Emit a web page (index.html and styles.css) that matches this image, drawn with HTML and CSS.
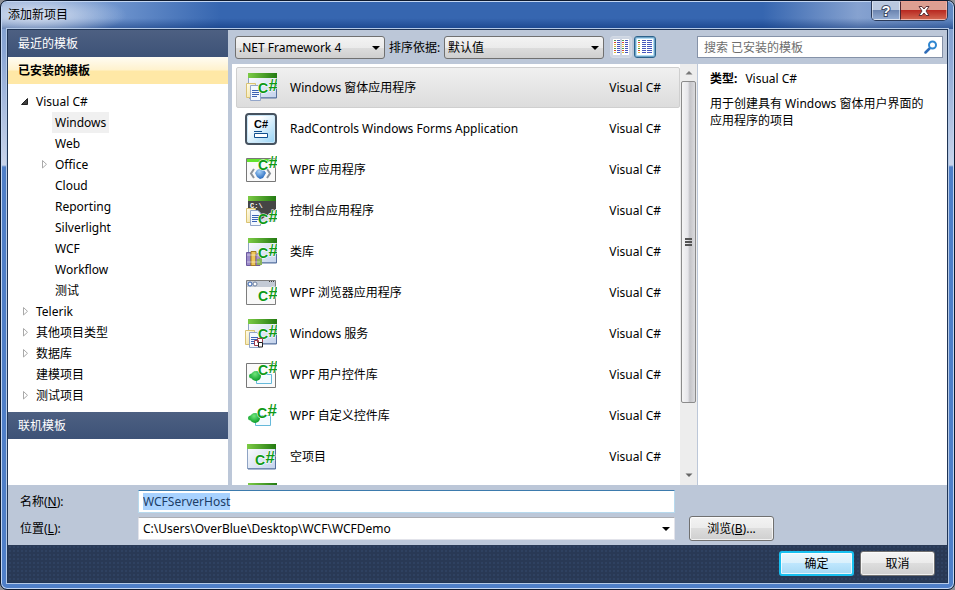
FILE: index.html
```
<!DOCTYPE html>
<html lang="zh-CN">
<head>
  <meta charset="UTF-8" />
  <title>添加新项目</title>
  <meta name="viewport" content="width=device-width, initial-scale=1.0">
  <link rel="stylesheet" href="styles.css">
</head>
<body>
  <!-- shared icon parts -->
  <svg class="defs" width="0" height="0" aria-hidden="true">
    <defs>
      <linearGradient id="gBar" x1="0" y1="0" x2="1" y2="0">
        <stop offset="0" stop-color="#7ccb45"/><stop offset="1" stop-color="#237a12"/>
      </linearGradient>
      <linearGradient id="gPane" x1="0" y1="0" x2="1" y2="1">
        <stop offset="0" stop-color="#ffffff"/><stop offset="1" stop-color="#c3d2ec"/>
      </linearGradient>
      <linearGradient id="gPage" x1="0" y1="0" x2="1" y2="1">
        <stop offset="0" stop-color="#fffdf0"/><stop offset="1" stop-color="#f0dc8c"/>
      </linearGradient>
      <linearGradient id="gRad" x1="0" y1="0" x2="1" y2="1">
        <stop offset="0.3" stop-color="#ffffff"/><stop offset="1" stop-color="#8fd0f5"/>
      </linearGradient>
      <radialGradient id="gBall" cx="0.4" cy="0.3" r="0.7">
        <stop offset="0" stop-color="#6fe67a"/><stop offset="1" stop-color="#0c9d2a"/>
      </radialGradient>
      <radialGradient id="gHex" cx="0.4" cy="0.3" r="0.7">
        <stop offset="0" stop-color="#a9d2f8"/><stop offset="1" stop-color="#2468bd"/>
      </radialGradient>
    </defs>
    <symbol id="window" viewBox="0 0 30 26">
      <rect x="0.5" y="0.5" width="28" height="24" fill="url(#gPane)" stroke="#8ea3c4"/>
      <path d="M28.5 4V25H1" fill="none" stroke="#56719f"/>
      <rect x="0" y="0" width="29" height="5" fill="url(#gBar)"/>
    </symbol>
    <symbol id="pages" viewBox="0 0 16 18">
      <path d="M0.500.5H9.500V14.500H0.500Z" fill="url(#gPage)" stroke="#d9c273"/>
      <path d="M4.500 2.500H12L14.500 5V17.500H4.500Z" fill="#f3f8ff" stroke="#92a5c9"/>
      <path d="M6 7.500H13M6 9.500H13M6 11.500H13M6 13.500H11" stroke="#3b62b4"/>
    </symbol>
  </svg>

  <div class="window">
    <header class="titlebar">
      <h1>添加新项目</h1>
      <div class="caption-buttons">
        <button class="caption help" type="button" aria-label="帮助">
          <svg width="14" height="14" viewBox="0 0 14 14"><text class="help-mark" x="7" y="12" text-anchor="middle">?</text></svg>
        </button>
        <button class="caption close" type="button" aria-label="关闭">
          <svg width="14" height="12" viewBox="0 0 14 12"><path d="M2 1.500H5L7 4 9 1.500H12L9 6 12 10.500H9L7 8 5 10.500H2L5 6Z" fill="#fff" stroke="#5b3036"/></svg>
        </button>
      </div>
    </header>

    <form class="client" onsubmit="return false">
      <div class="panes">
        <nav class="sidebar">
          <h2 class="group">最近的模板</h2>
          <h2 class="group active">已安装的模板</h2>
          <ul class="tree">
            <li><a href="#"><svg class="twisty" viewBox="0 0 9 9"><path d="M6.500 1.500V7.500H0.500Z" fill="#404040" stroke="#222"/></svg>Visual C#</a>
              <ul>
                <li><a href="#" class="current"><span>Windows</span></a></li>
                <li><a href="#">Web</a></li>
                <li><a href="#"><svg class="twisty" viewBox="0 0 9 9"><path d="M2.500 0.500V8L6.500 4.300Z" fill="#fff" stroke="#a9a9a9"/></svg>Office</a></li>
                <li><a href="#">Cloud</a></li>
                <li><a href="#">Reporting</a></li>
                <li><a href="#">Silverlight</a></li>
                <li><a href="#">WCF</a></li>
                <li><a href="#">Workflow</a></li>
                <li><a href="#">测试</a></li>
              </ul>
            </li>
            <li><a href="#"><svg class="twisty" viewBox="0 0 9 9"><path d="M2.500 0.500V8L6.500 4.300Z" fill="#fff" stroke="#a9a9a9"/></svg>Telerik</a></li>
            <li><a href="#"><svg class="twisty" viewBox="0 0 9 9"><path d="M2.500 0.500V8L6.500 4.300Z" fill="#fff" stroke="#a9a9a9"/></svg>其他项目类型</a></li>
            <li><a href="#"><svg class="twisty" viewBox="0 0 9 9"><path d="M2.500 0.500V8L6.500 4.300Z" fill="#fff" stroke="#a9a9a9"/></svg>数据库</a></li>
            <li><a href="#">建模项目</a></li>
            <li><a href="#"><svg class="twisty" viewBox="0 0 9 9"><path d="M2.500 0.500V8L6.500 4.300Z" fill="#fff" stroke="#a9a9a9"/></svg>测试项目</a></li>
          </ul>
          <h2 class="group">联机模板</h2>
        </nav>

        <section class="main">
          <div class="toolbar">
            <span class="select framework">
              <select aria-label="框架"><option>.NET Framework 4</option></select>
            </span>
            <label for="sort">排序依据:</label>
            <span class="select sort">
              <select id="sort"><option>默认值</option></select>
            </span>
            <button class="view" type="button" aria-label="小图标">
              <svg width="16" height="16" viewBox="0 0 16 16">
                <path d="M0 0H7V16H0ZM9 0H16V16H9Z" fill="#fff"/>
                <path d="M1 1.500H3M9 1.500H11M1 9.500H3M9 9.500H11" stroke="#4f9a48"/>
                <path d="M1 3.500H3M9 3.500H11M1 11.500H3M9 11.500H11" stroke="#d9442f"/>
                <path d="M1 5.500H3M9 5.500H11M1 7.500H3M9 7.500H11M1 13.500H3M9 13.500H11" stroke="#d8b83a"/>
                <path d="M4 1.500H7M4 3.500H7M4 5.500H7M4 7.500H7M4 9.500H7M4 11.500H7M4 13.500H7M12 1.500H15M12 3.500H15M12 5.500H15M12 7.500H15M12 9.500H15M12 11.500H15M12 13.500H15" stroke="#4657bd"/>
              </svg>
            </button>
            <button class="view pressed" type="button" aria-label="中等图标">
              <svg width="16" height="16" viewBox="0 0 16 16">
                <path d="M0 0H16V16H0Z" fill="#fff"/>
                <path d="M1 1.500H3M1 9.500H3" stroke="#4f9a48"/>
                <path d="M1 3.500H3M1 11.500H3" stroke="#d9442f"/>
                <path d="M1 5.500H3M1 7.500H3M1 13.500H3" stroke="#d8b83a"/>
                <path d="M5 1.500H9M5 3.500H9M5 5.500H9M5 7.500H9M5 9.500H9M5 11.500H9M5 13.500H9M10 1.500H15M10 3.500H15M10 5.500H15M10 7.500H15M10 9.500H15M10 11.500H15M10 13.500H15" stroke="#4657bd"/>
              </svg>
            </button>
          </div>

          <div class="list-wrap">
            <ul class="templates">
              <li><a href="#" class="selected">
                <svg class="icon" viewBox="0 0 32 32"><use href="#window" x="3" y="1" width="30" height="26"/><use href="#pages" x="1" y="11" width="16" height="18"/><text class="cs-text" x="13" y="21">C<tspan class="sharp">#</tspan></text></svg>
                <span class="name">Windows 窗体应用程序</span><span>Visual C#</span></a></li>
              <li><a href="#">
                <svg class="icon" viewBox="0 0 32 32"><rect x="1" y="1" width="30" height="30" rx="3" fill="url(#gRad)" stroke="#46525f" stroke-width="2"/><rect x="2.500" y="2.500" width="27" height="27" rx="2" fill="none" stroke="#c9e6f7"/><text class="rad-text" x="16" y="15" text-anchor="middle">C#</text><path d="M9 18.500H17M9.500 20.500H22.500V24.500H9.500Z" fill="#fff" stroke="#12508f"/></svg>
                <span class="name">RadControls Windows Forms Application</span><span>Visual C#</span></a></li>
              <li><a href="#">
                <svg class="icon" viewBox="0 0 32 32"><path d="M1.500 4.500H30.500V27.500H1.500Z" fill="#fafafa" stroke="#777"/><path d="M2 5H30V8H2Z" fill="#63e32e"/><path d="M9 15L6 19.500 9 24M22 15L25 19.500 22 24" fill="none" stroke="#8c939b" stroke-width="2"/><path d="M12 16L15 14.500 19 16 21 19 18 24 15 25 12 23 10 19Z" fill="url(#gHex)"/><text class="cs-text" x="13" y="16">C<tspan class="sharp">#</tspan></text></svg>
                <span class="name">WPF 应用程序</span><span>Visual C#</span></a></li>
              <li><a href="#">
                <svg class="icon" viewBox="0 0 32 32"><rect x="3" y="1" width="28" height="25" fill="#454545"/><rect x="3" y="1" width="28" height="5" fill="url(#gBar)"/><text class="prompt" x="5" y="13">C:\</text><path d="M14 26L31 14V27H14Z" fill="#d5dce8"/><use href="#pages" x="1" y="13" width="16" height="18"/><text class="cs-text" x="13" y="29">C<tspan class="sharp">#</tspan></text></svg>
                <span class="name">控制台应用程序</span><span>Visual C#</span></a></li>
              <li><a href="#">
                <svg class="icon" viewBox="0 0 32 32"><use href="#window" x="3" y="2" width="30" height="26"/><path d="M1.500 16.500H6V29.500H1.500Z" fill="#9b8ac9" stroke="#6c5a9e"/><path d="M6 15.500H11V29.500H6Z" fill="#eec659" stroke="#a67c22"/><path d="M11 18.500L15 17V29.500H11Z" fill="#ae92c8" stroke="#735a94"/><path d="M12 23L17 22V29H12Z" fill="#8bb45a"/><path d="M2 19H15M2 26H15" stroke="#fff" opacity="0.500"/><text class="cs-text" x="13" y="22">C<tspan class="sharp">#</tspan></text></svg>
                <span class="name">类库</span><span>Visual C#</span></a></li>
              <li><a href="#">
                <svg class="icon" viewBox="0 0 32 32"><path d="M1.500 3.500H30.500V27.500H1.500Z" fill="#f8f8f8" stroke="#7d7d7d"/><path d="M2 4H30V10H2Z" fill="#c3cad5"/><circle cx="5" cy="7" r="2" fill="#fff" stroke="#3461ad"/><circle cx="10" cy="7" r="2" fill="#fff" stroke="#6d7f9d"/><path d="M24 4.500H29" stroke="#444" stroke-dasharray="1 1"/><text class="cs-text" x="13" y="24">C<tspan class="sharp">#</tspan></text></svg>
                <span class="name">WPF 浏览器应用程序</span><span>Visual C#</span></a></li>
              <li><a href="#">
                <svg class="icon" viewBox="0 0 32 32"><use href="#window" x="3" y="1" width="30" height="26"/><use href="#pages" x="0" y="12" width="16" height="18"/><text class="cs-text" x="13" y="21">C<tspan class="sharp">#</tspan></text><path d="M9.500 22.500H13.500V27.500H9.500ZM12.500 20.500H17.500V24.500H12.500Z" fill="#fff" stroke="#a03b4b"/><path d="M13.500 24.500H17.500V29H13.500Z" fill="#fff" stroke="#222"/></svg>
                <span class="name">Windows 服务</span><span>Visual C#</span></a></li>
              <li><a href="#">
                <svg class="icon" viewBox="0 0 32 32"><path d="M1.500 4.500H30.500V28.500H1.500Z" fill="#fafafa" stroke="#777"/><path d="M11.500 15.500H26.500V24.500H11.500Z" fill="#f4fbff" stroke="#65b9da"/><ellipse cx="7" cy="17" rx="3" ry="2.500" fill="#2fb747"/><circle cx="11" cy="17" r="5" fill="url(#gBall)"/><text class="cs-text" x="13" y="16">C<tspan class="sharp">#</tspan></text></svg>
                <span class="name">WPF 用户控件库</span><span>Visual C#</span></a></li>
              <li><a href="#">
                <svg class="icon" viewBox="0 0 32 32"><path d="M10.500 15.500H25.500V25.500H10.500Z" fill="#f4fbff" stroke="#65b9da"/><ellipse cx="6" cy="18" rx="3" ry="2.500" fill="#2fb747"/><circle cx="10" cy="18" r="5" fill="url(#gBall)"/><text class="cs-text" x="12" y="18">C<tspan class="sharp">#</tspan></text></svg>
                <span class="name">WPF 自定义控件库</span><span>Visual C#</span></a></li>
              <li><a href="#">
                <svg class="icon" viewBox="0 0 32 32"><use href="#window" x="2" y="3" width="30" height="26"/><text class="cs-text" x="10" y="24">C<tspan class="sharp">#</tspan></text></svg>
                <span class="name">空项目</span><span>Visual C#</span></a></li>
              <li><a href="#" aria-label="更多">
                <svg class="icon" viewBox="0 0 32 32"><use href="#window" x="3" y="1" width="30" height="26"/></svg></a></li>
            </ul>
            <div class="scrollbar">
              <svg width="8" height="5" viewBox="0 0 8 5"><path d="M0.500 4.500L4 1 7.500 4.500Z" fill="#777"/></svg>
              <div class="thumb"><i></i><i></i><i></i></div>
              <svg width="8" height="5" viewBox="0 0 8 5"><path d="M0.500 0.500L4 4 7.500 0.500Z" fill="#666"/></svg>
            </div>
          </div>
        </section>

        <aside class="details">
          <div class="search">
            <input type="search" aria-label="搜索" placeholder="搜索 已安装的模板">
            <svg width="14" height="14" viewBox="0 0 14 14"><path d="M5.500 8.500L1.500 12.500" stroke="#2f6cb8" stroke-width="2.500" stroke-linecap="round"/><circle cx="8.500" cy="5" r="3.500" fill="#fff" stroke="#2f86d0" stroke-width="2"/></svg>
          </div>
          <div class="description">
            <p><b>类型:</b>Visual C#</p>
            <p>用于创建具有 Windows 窗体用户界面的应用程序的项目</p>
          </div>
        </aside>
      </div>

      <div class="fields">
        <label for="name">名称(<u>N</u>):</label>
        <input id="name" type="text" value="WCFServerHost">
        <label for="location">位置(<u>L</u>):</label>
        <span class="select location">
          <select id="location"><option>C:\Users\OverBlue\Desktop\WCF\WCFDemo</option></select>
        </span>
        <button class="btn browse" type="button">浏览(<u>B</u>)...</button>
      </div>

      <footer class="actions">
        <button class="btn default" type="submit">确定</button>
        <button class="btn" type="button">取消</button>
      </footer>
    </form>
  </div>

  <script>
    document.getElementById("name").select();
  </script>
</body>
</html>
```
FILE: styles.css
```
* {
  box-sizing: border-box;
}
body {
  margin: 0;
  background: #8d8f94;
  color: #000;
  font: 12px/17px "Noto Sans", "Noto Sans CJK SC", sans-serif;
}
h1, h2, p, ul {
  margin: 0;
  padding: 0;
  font-size: 12px;
  font-weight: normal;
}
ul {
  list-style: none;
}
a {
  color: inherit;
  text-decoration: none;
}
input, select, button {
  font: inherit;
  color: inherit;
  border-radius: 0;
  outline: none;
}
.defs {
  position: absolute;
}

/* window frame */
.window {
  display: flex;
  flex-direction: column;
  min-height: 100vh;
  padding: 0 6px 6px;
  border: 1px solid #0e1a2e;
  border-radius: 7px;
  box-shadow: inset 0 0 0 1px #c3d6f2;
  background: linear-gradient(to bottom, #7e9dcb 0, #8aa6d4 50px, #c9d4ea 164px, #4f7fc8 166px, #4f7fc8 100%);
}
.titlebar {
  display: flex;
  justify-content: space-between;
  height: 27px;
  margin: 1px -5px 0;
  padding-left: 6px;
  border-radius: 5px 5px 0 0;
  background:
    radial-gradient(ellipse 90px 22px at 35px 13px, rgba(225, 232, 244, 0.9), rgba(200, 213, 236, 0)),
    linear-gradient(to bottom, rgba(0, 30, 90, 0), rgba(0, 30, 90, 0) 60%, rgba(0, 40, 110, 0.5)),
    linear-gradient(to right, #93add6, #6d93cd 12%, #3666b0 23%, #3666b0 80%, #86a2d0 90%, #6289c3);
}
.titlebar h1 {
  line-height: 26px;
}
.caption-buttons {
  display: flex;
  height: 20px;
  margin-right: 5px;
  margin-top: -1px;
  border: 1px solid #2a3a59;
  border-top: 0;
  border-radius: 0 0 5px 5px;
  overflow: hidden;
}
.caption {
  display: flex;
  align-items: center;
  justify-content: center;
  width: 28px;
  padding: 0;
  border: 1px solid rgba(255, 255, 255, 0.5);
  background: linear-gradient(to bottom, #b9c8df 45%, #6d86b1 50%, #93abd1);
}
.close {
  width: 47px;
  border-color: rgba(255, 200, 190, 0.6);
  border-left-color: #4c2630;
  background: linear-gradient(to bottom, #dd9f92 45%, #b92a22 50%, #d0644f);
}
.help-mark {
  font: bold 14px "Liberation Sans", sans-serif;
  fill: #fff;
  stroke: #3d4a66;
  stroke-width: 2px;
  paint-order: stroke;
}
.client {
  display: flex;
  flex-direction: column;
  flex: 1;
  border: 1px solid #1f3454;
  box-shadow: 0 0 0 1px #b4c9e6;
  background: #bcc7d8;
}
.panes {
  display: grid;
  grid-template-columns: 220px 1fr 250px;
  flex: 1;
}

/* template groups */
.sidebar {
  background: #fff;
}
.group {
  height: 27px;
  padding-left: 10px;
  line-height: 27px;
  color: #fff;
  background: linear-gradient(to bottom, #4d6082, #3d5277);
}
.group.active {
  color: #000;
  font-weight: bold;
  background: linear-gradient(to bottom, #fffcf3, #fff2cd 48%, #ffe8a6 52%, #ffe8a6);
}
.tree {
  padding: 7px 0 6px;
}
.tree a {
  display: flex;
  align-items: center;
  height: 21px;
  padding-left: 28px;
}
.tree ul a {
  padding-left: 47px;
}
.twisty {
  width: 9px;
  height: 9px;
  margin-left: -15px;
  margin-right: 6px;
}
.current span {
  margin-left: -3px;
  padding: 2px 3px;
  background: #f0f0f0;
}

/* template list */
.main {
  display: flex;
  flex-direction: column;
  padding-left: 4px;
}
.toolbar {
  display: flex;
  align-items: center;
  height: 34px;
  padding-left: 3px;
}
.toolbar label {
  width: 59px;
  padding-left: 4px;
  white-space: nowrap;
}
.select {
  position: relative;
  display: block;
}
.select::after {
  content: "";
  position: absolute;
  right: 5px;
  top: 10px;
  border: 4px solid transparent;
  border-top-color: #000;
  border-bottom: 0;
  pointer-events: none;
}
.select select {
  display: block;
  width: 100%;
  height: 23px;
  padding: 0 3px;
  border: 1px solid #707070;
  border-radius: 3px;
  appearance: none;
  background: linear-gradient(to bottom, #f3f3f3, #ebebeb 50%, #dddddd 50%, #cfcfcf);
}
.framework {
  width: 150px;
}
.sort {
  width: 160px;
  margin-right: 6px;
}
.view {
  display: flex;
  align-items: center;
  justify-content: center;
  width: 22px;
  height: 22px;
  margin-right: 2px;
  padding: 0;
  border: 1px solid #d3dae5;
  border-radius: 3px;
  background: #cdd5e2;
}
.view.pressed {
  border: 1px solid #2c628b;
  box-shadow: inset 0 0 0 1px #6fa5c8;
  background: #b4dcf3;
}
.list-wrap {
  display: flex;
  flex: 1;
  background: #fff;
}
.templates {
  flex: 1;
  height: 0;
  min-height: 100%;
  padding: 3px 0 0 4px;
  overflow: hidden;
}
.templates a {
  display: flex;
  align-items: center;
  height: 41px;
  padding: 0 18px 0 8px;
  border: 1px solid transparent;
  border-radius: 2px;
}
.templates .selected {
  border-color: #cfcfcf;
  background: linear-gradient(to bottom, #f0f0f0, #dcdcdc);
}
.icon {
  flex: none;
  width: 32px;
  height: 32px;
  margin-right: 13px;
}
.name {
  flex: 1;
}
.cs-text {
  font: bold 14px "Liberation Sans", sans-serif;
  fill: #0f9a17;
  stroke: #fff;
  stroke-width: 1px;
  paint-order: stroke;
}
.sharp {
  font-size: 17px;
  font-style: italic;
  baseline-shift: 2px;
}
.rad-text {
  font: bold 11px "Liberation Sans", sans-serif;
}
.prompt {
  font: bold 7px "Liberation Mono", monospace;
  fill: #fff;
}
.scrollbar {
  display: flex;
  flex-direction: column;
  align-items: center;
  width: 17px;
  padding: 6px 0 7px;
  background: #ededed;
}
.thumb {
  display: flex;
  flex-direction: column;
  justify-content: center;
  align-items: center;
  gap: 1px;
  width: 15px;
  height: 79%;
  margin-top: 6px;
  margin-bottom: auto;
  border: 1px solid #8b8b8b;
  border-radius: 2px;
  background: linear-gradient(to right, #f5f5f5, #e6e6ea 45%, #c4c4c8 60%, #dadadd);
}
.thumb i {
  width: 7px;
  height: 2px;
  background: #555;
}

/* details */
.details {
  display: flex;
  flex-direction: column;
}
.search {
  display: flex;
  align-items: center;
  height: 22px;
  margin: 6px 4px 6px 0;
  padding-right: 4px;
  border: 1px solid #8592a8;
  background: #fff;
}
.search input {
  flex: 1;
  min-width: 0;
  padding: 0 6px;
  border: 0;
  background: none;
}
.search input::placeholder {
  color: #6d6d6d;
}
.description {
  flex: 1;
  margin-left: 1px;
  padding: 6px 12px;
  background: #fff;
}
.description p {
  margin-bottom: 8px;
}
.description b {
  margin-right: 8px;
}

/* name and location */
.fields {
  display: grid;
  grid-template-columns: 118px 537px auto;
  grid-template-rows: 24px 24px;
  gap: 3px 0;
  align-items: center;
  justify-content: start;
  height: 60px;
  padding: 4px 0 5px 12px;
}
.fields input {
  grid-column: 2;
  height: 23px;
  padding: 0 4px;
  border: 1px solid #b7d9ed;
  border-top-color: #3d7bad;
}
.fields label {
  grid-column: 1;
}
.fields input::selection {
  background: #a8d2ff;
  color: #1c3d66;
}
.fields .location select {
  padding: 0 4px;
  border-color: #abadb3 #e2e3ea #e2e3ea;
  border-radius: 0;
  background: #fff;
}
.btn {
  width: 75px;
  height: 25px;
  padding: 0;
  border: 1px solid #707070;
  border-radius: 3px;
  box-shadow: inset 0 0 0 1px rgba(255, 255, 255, 0.7);
  background: linear-gradient(to bottom, #f3f3f3, #ebebeb 50%, #dddddd 50%, #cfcfcf);
}
.browse {
  width: 85px;
  margin-left: 14px;
}
.default {
  border: 2px solid #18c0f0;
  background: linear-gradient(to bottom, #eaf6fd, #d9f0fc 50%, #bee6fd 50%, #a7d9f5);
}
.actions {
  display: flex;
  justify-content: flex-end;
  align-items: flex-start;
  gap: 6px;
  height: 37px;
  padding: 6px 12px;
  background: radial-gradient(circle, #33476a 0.5px, transparent 1px) 0 0 / 4px 4px, #293955;
}
```
